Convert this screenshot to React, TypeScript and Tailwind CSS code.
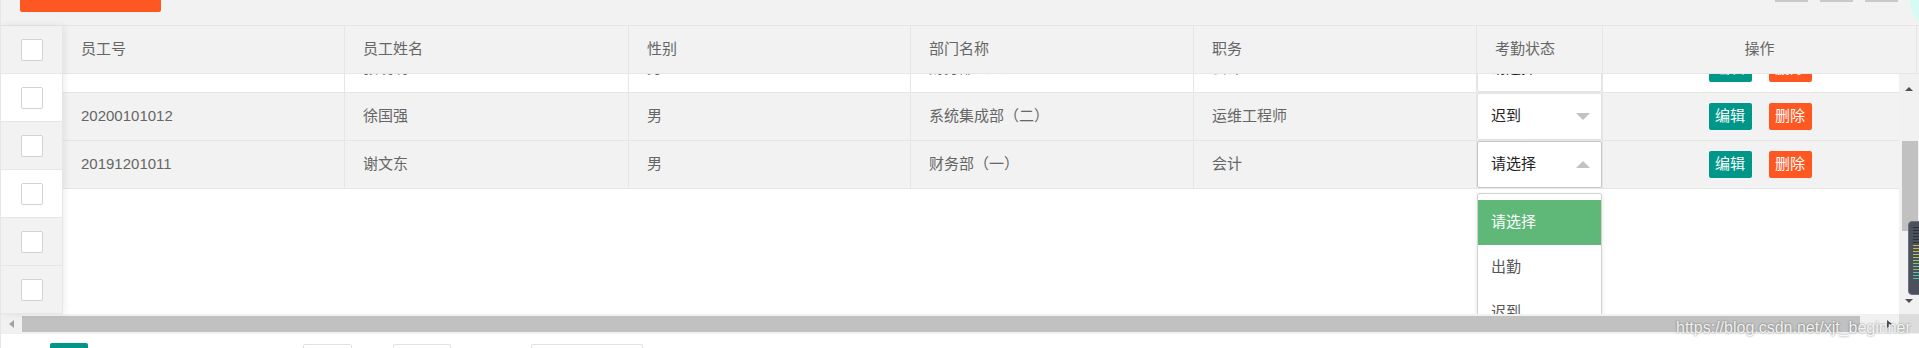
import React from 'react';

// column widths measured from the table (px, right border included)
const COLS = [
  { key: 'no', title: '员工号', w: 'w-[282px]' },
  { key: 'name', title: '员工姓名', w: 'w-[284px]' },
  { key: 'sex', title: '性别', w: 'w-[282px]' },
  { key: 'dept', title: '部门名称', w: 'w-[283px]' },
  { key: 'job', title: '职务', w: 'w-[283px]' },
];

type Row = {
  no: string;
  name: string;
  sex: string;
  dept: string;
  job: string;
  status: string;
  open?: boolean;
  bg: string;
};

const ROWS: Row[] = [
  { no: '20200101013', name: '张晓明', sex: '男', dept: '财务部（一）', job: '会计', status: '请选择', bg: 'bg-white' },
  { no: '20200101012', name: '徐国强', sex: '男', dept: '系统集成部（二）', job: '运维工程师', status: '迟到', bg: 'bg-[#f2f2f2]' },
  { no: '20191201011', name: '谢文东', sex: '男', dept: '财务部（一）', job: '会计', status: '请选择', open: true, bg: 'bg-[#f2f2f2]' },
];

const FIXED_BG = ['bg-white', 'bg-[#f2f2f2]', 'bg-white', 'bg-[#f2f2f2]', 'bg-[#f2f2f2]'];

const Checkbox = () => (
  <div className="w-[22px] h-[22px] bg-white border border-[#d2d2d2] rounded-[2px]" />
);

const Caret = ({ up }: { up?: boolean }) => (
  <svg width="14" height="7" viewBox="0 0 14 7">
    {up ? <path d="M0 7 L7 0 L14 7 Z" fill="#c2c2c2" /> : <path d="M0 0 L14 0 L7 7 Z" fill="#c2c2c2" />}
  </svg>
);

const Select = ({ value, open }: { value: string; open?: boolean }) => (
  <div
    className={`w-full h-full bg-white rounded-[2px] border flex items-center justify-between pl-[13px] pr-[11px] text-[#222] ${
      open ? 'border-[#c6c6c6]' : 'border-[#e2e2e2]'
    }`}
  >
    <span>{value}</span>
    <Caret up={open} />
  </div>
);

const VolumeMeter = () => {
  const bars = [
    '#2d3038', '#2d3038', '#2d3038', '#2d3038', '#2d3038', '#2d3038',
    '#c9b64a', '#c9b64a', '#c3bc52', '#b8c05a', '#a8c463', '#9ac66b',
    '#8cc874', '#7cc77f', '#6cc68c', '#5cc59a', '#4ec4a8', '#45c2b2',
  ];
  return (
    <div className="absolute left-[1907px] top-[221px] w-[14px] h-[74px] rounded-l-[4px] bg-[#4b505c] border border-[#6a707c] flex flex-col gap-[2px] pl-[4px] pt-[5px]">
      {bars.map((c, i) => (
        <div key={i} className="w-[8px] h-[1px]" style={{ backgroundColor: c }} />
      ))}
    </div>
  );
};

const App: React.FC = () => {
  return (
    <div className="relative w-[1919px] h-[348px] overflow-hidden bg-white border-l border-[#e6e6e6] text-[15px] text-[#666] font-['Liberation_Sans','Noto_Sans_CJK_SC',sans-serif]">
      {/* toolbar (scrolled, only its bottom shows) */}
      <div className="relative h-[25px] bg-[#f2f2f2] flex items-start">
        <div className="ml-[19px] mt-[-26px] w-[141px] h-[38px] rounded-[2px] bg-[#FF5722]" />
        <div className="ml-auto mr-[21px] flex gap-[12px]">
          <div className="w-[33px] h-[2px] bg-[#c9c9c9]" />
          <div className="w-[33px] h-[2px] bg-[#c9c9c9]" />
          <div className="w-[33px] h-[2px] bg-[#c9c9c9]" />
        </div>
        <div className="absolute left-[1909px] top-[-22px] w-[48px] h-[48px] rounded-full bg-[#d8faf6]" />
      </div>

      {/* table */}
      <div className="relative border-t border-[#e6e6e6]">
        {/* header */}
        <div className="flex h-[48px] bg-[#f2f2f2] border-b border-[#e6e6e6]">
          <div className="w-[62px] shrink-0 border-r border-[#e6e6e6]" />
          {COLS.map((c) => (
            <div key={c.key} className={`${c.w} shrink-0 border-r border-[#e6e6e6] flex items-center pl-[18px]`}>
              {c.title}
            </div>
          ))}
          <div className="w-[126px] shrink-0 border-r border-[#e6e6e6] flex items-center pl-[18px]">考勤状态</div>
          <div className="w-[314px] shrink-0 border-r border-[#e6e6e6] flex items-center justify-center">操作</div>
        </div>

        {/* body */}
        <div className="flex h-[240px]">
          <div className="relative flex-1 overflow-hidden bg-white">
            <div className="mt-[-29px] w-[1916px]">
              {ROWS.map((r) => (
                <div key={r.no} className={`flex h-[48px] border-b border-[#e6e6e6] ${r.bg}`}>
                  <div className="w-[62px] shrink-0 border-r border-[#e6e6e6]" />
                  {COLS.map((c) => (
                    <div key={c.key} className={`${c.w} shrink-0 border-r border-[#e6e6e6] flex items-center pl-[18px] whitespace-nowrap`}>
                      {r[c.key as keyof Row] as string}
                    </div>
                  ))}
                  <div className="w-[126px] shrink-0 border-r border-[#e6e6e6] flex">
                    <Select value={r.status} open={r.open} />
                  </div>
                  <div className="w-[314px] shrink-0 border-r border-[#e6e6e6] flex items-center justify-center gap-[17px] pl-[1px]">
                    <button className="w-[43px] h-[27px] rounded-[2px] bg-[#009688] text-white flex items-center justify-center">编辑</button>
                    <button className="w-[43px] h-[27px] rounded-[2px] bg-[#FF5722] text-white flex items-center justify-center">删除</button>
                  </div>
                </div>
              ))}
            </div>

            {/* open select dropdown */}
            <div className="absolute left-[1476px] top-[119px] w-[125px] h-[200px] bg-white border border-[#d2d2d2] rounded-[2px] shadow-[0_2px_4px_rgba(0,0,0,0.12)] pt-[6px]">
              <div className="h-[45px] flex items-center pl-[13px] bg-[#5FB878] text-white">请选择</div>
              <div className="h-[45px] flex items-center pl-[13px] text-[#555]">出勤</div>
              <div className="h-[45px] flex items-center pl-[13px] text-[#555]">迟到</div>
              <div className="h-[45px] flex items-center pl-[13px] text-[#555]">早退</div>
            </div>
          </div>

          {/* vertical scrollbar */}
          <div className="w-[20px] shrink-0 bg-[#f1f1f1] flex flex-col items-center">
            <div className="h-[17px] flex items-end justify-center">
              <svg width="8" height="4" viewBox="0 0 8 4"><path d="M0 4 L4 0 L8 4 Z" fill="#505050" /></svg>
            </div>
            <div className="mt-[50px] w-[16px] h-[90px] bg-[#c1c1c1] self-end mr-[1px]" />
            <div className="mt-auto h-[17px] flex items-start justify-center pt-[2px]">
              <svg width="8" height="4" viewBox="0 0 8 4"><path d="M0 0 L8 0 L4 4 Z" fill="#505050" /></svg>
            </div>
          </div>
        </div>

        {/* fixed checkbox column */}
        <div className="absolute left-0 top-0 w-[62px] border-r border-[#e6e6e6] shadow-[1px_0_8px_rgba(0,0,0,0.08)]">
          <div className="h-[48px] bg-[#f2f2f2] border-b border-[#e6e6e6] flex items-center justify-center">
            <Checkbox />
          </div>
          {FIXED_BG.map((bg, i) => (
            <div key={i} className={`h-[48px] border-b border-[#e6e6e6] flex items-center justify-center ${bg}`}>
              <Checkbox />
            </div>
          ))}
        </div>

        {/* horizontal scrollbar */}
        <div className="flex h-[19px]">
          <div className="flex-1 bg-[#f1f1f1] flex items-center pt-[1px]">
            <div className="w-[21px] flex justify-center">
              <svg width="5" height="8" viewBox="0 0 5 8"><path d="M5 0 L0 4 L5 8 Z" fill="#a3a3a3" /></svg>
            </div>
            <div className="w-[1838px] h-[16px] bg-[#c1c1c1]" />
            <div className="ml-[27px]">
              <svg width="5" height="8" viewBox="0 0 5 8"><path d="M0 0 L5 4 L0 8 Z" fill="#505050" /></svg>
            </div>
          </div>
          <div className="w-[20px] shrink-0 bg-[#dcdcdc]" />
        </div>
      </div>

      {/* pagination, mostly below the fold */}
      <div className="h-[15px] flex items-start border-t border-[#f0f0f0]">
        <div className="ml-[49px] mt-[9px] w-[38px] h-[30px] rounded-[2px] bg-[#009688]" />
        <div className="ml-[215px] mt-[10px] w-[49px] h-[30px] rounded-[2px] border border-[#e2e2e2]" />
        <div className="ml-[41px] mt-[10px] w-[58px] h-[30px] rounded-[2px] border border-[#e2e2e2]" />
        <div className="ml-[80px] mt-[10px] w-[112px] h-[30px] rounded-[2px] border border-[#e2e2e2]" />
      </div>

      <VolumeMeter />

      {/* csdn watermark */}
      <div className="absolute left-[1675px] top-[318px] text-[16px] leading-[20px] font-['Liberation_Sans',sans-serif] text-white/90 [text-shadow:0_0_2px_rgba(0,0,0,0.55)]">
        https://blog.csdn.net/xjt_beginner
      </div>
    </div>
  );
};

export default App;
